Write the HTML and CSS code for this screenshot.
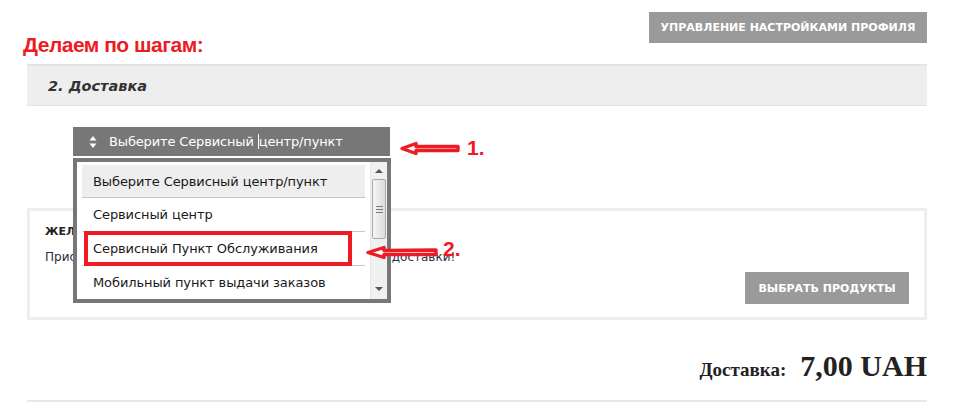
FILE: index.html
```html
<!DOCTYPE html>
<html lang="ru">
<head>
<meta charset="utf-8">
<title>Доставка</title>
<link rel="stylesheet" href="styles.css">
</head>
<body>
<div class="page">
  <header class="top">
    <h1 class="steps-title">Делаем по шагам:</h1>
    <a class="btn btn-profile" href="#">УПРАВЛЕНИЕ НАСТРОЙКАМИ ПРОФИЛЯ</a>
  </header>

  <section class="step">
    <div class="step-head">2. Доставка</div>
    <div class="step-body">
      <div class="select-wrap">
        <div class="select">
          <svg class="select-icon" width="8" height="14" viewBox="0 0 8 14"><path d="M4 1 L7.5 5.5 L0.5 5.5 Z M4 13 L7.5 8.5 L0.5 8.5 Z" fill="#fff"/></svg>
          <span class="select-text">Выберите Сервисный <span class="caret"></span>центр/пункт</span>
        </div>

        <div class="dropdown">
          <ul class="options">
            <li class="option option-first">Выберите Сервисный центр/пункт</li>
            <li class="option">Сервисный центр</li>
            <li class="option">Сервисный Пункт Обслуживания</li>
            <li class="option">Мобильный пункт выдачи заказов</li>
          </ul>
          <div class="scrollbar">
            <span class="sb-up"></span>
            <span class="sb-thumb"><span class="grip"></span><span class="grip"></span><span class="grip"></span></span>
            <span class="sb-down"></span>
          </div>
          <div class="highlight"></div>
        </div>

        <svg class="note-arrow note-arrow-1" width="62" height="15" viewBox="0 0 62 15"><path d="M3 7.5 L17 2.5 L17 5.5 L59 5.5 L59 9.5 L17 9.5 L17 12.5 Z" fill="#fff" stroke="#ed1c24" stroke-width="3.4" stroke-linejoin="round"/></svg>
        <span class="note-num note-num-1">1.</span>
        <svg class="note-arrow note-arrow-2" width="74" height="15" viewBox="0 0 74 15"><path d="M3 7.5 L19 2.5 L19 5.5 L71 5 L71 9.5 L19 9.5 L19 12.5 Z" fill="#fff" stroke="#ed1c24" stroke-width="3.4" stroke-linejoin="round"/></svg>
        <span class="note-num note-num-2">2.</span>
      </div>

      <div class="panel">
        <div class="panel-title">ЖЕЛАЕМЫЙ СПОСОБ ДОСТАВКИ</div>
        <div class="panel-text">Приоритетный способ и срок указан при оформлении доставки!</div>
        <div class="panel-actions">
          <a class="btn btn-products" href="#">ВЫБРАТЬ ПРОДУКТЫ</a>
        </div>
      </div>
    </div>
  </section>

  <div class="total">
    <span class="total-label">Доставка:</span>
    <span class="total-value">7,00 UAH</span>
  </div>
</div>
</body>
</html>
```

FILE: styles.css
```css
* { box-sizing: border-box; }

body {
  margin: 0;
  background: #fff;
  font-family: "DejaVu Sans", Verdana, sans-serif;
  color: #222;
}

.page {
  width: 900px;
  margin-left: 27px;
}

.top {
  height: 64px;
  display: flex;
  justify-content: space-between;
  align-items: flex-start;
}

.steps-title {
  margin: 34px 0 0 -4px;
  font-family: "Liberation Sans", Arial, sans-serif;
  font-size: 21px;
  line-height: 21px;
  letter-spacing: -0.5px;
  font-weight: bold;
  color: #ed1c24;
}

.btn {
  display: flex;
  align-items: center;
  justify-content: center;
  background: #999a99;
  color: #fff;
  font-family: "DejaVu Sans", Verdana, sans-serif;
  font-weight: bold;
  font-size: 11px;
  text-decoration: none;
}

.btn-profile {
  margin-top: 12px;
  width: 278px;
  height: 31px;
}

.step-head {
  height: 42px;
  background: #eeeeee;
  border-top: 2px solid #e3e3e3;
  border-bottom: 1px solid #e3e3e3;
  padding-left: 21px;
  display: flex;
  align-items: center;
  font-weight: bold;
  font-style: italic;
  font-size: 14.5px;
  color: #333;
}

.step-body {
  padding-top: 21px;
}

.select-wrap {
  position: relative;
  margin-left: 46px;
  width: 317px;
}

.select {
  height: 29px;
  background: #777777;
  display: flex;
  align-items: center;
  padding-left: 16px;
  gap: 12px;
  color: #fff;
  font-size: 13px;
  letter-spacing: -0.15px;
}

.select-icon { display: block; }

.select-text { white-space: nowrap; }

.caret {
  display: inline-block;
  width: 1px;
  height: 15px;
  background: #fff;
  vertical-align: -3px;
}

.dropdown {
  position: absolute;
  left: 0;
  top: 31px;
  width: 318px;
  height: 145px;
  background: #fff;
  border: 4px solid #777777;
  display: flex;
  padding-left: 5px;
  z-index: 2;
}

.options {
  list-style: none;
  margin: 0;
  padding: 3px 0 0 0;
  width: 283px;
  overflow: hidden;
}

.option {
  height: 34px;
  border-bottom: 1px solid #c8c8c8;
  display: flex;
  align-items: center;
  padding-left: 11px;
  font-size: 13px;
  letter-spacing: -0.1px;
  color: #1a1a1a;
  white-space: nowrap;
}

.option-first {
  background: #eeeeee;
  height: 33px;
}

.scrollbar {
  margin-left: 5px;
  width: 17px;
  background: #f0f0f0;
  border-left: 1px solid #e6e6e6;
  display: flex;
  flex-direction: column;
  align-items: center;
  padding-top: 7px;
}

.sb-up, .sb-down {
  width: 0;
  height: 0;
  border-left: 4px solid transparent;
  border-right: 4px solid transparent;
}
.sb-up { border-bottom: 4px solid #555; }
.sb-down { border-top: 4px solid #555; margin-top: auto; margin-bottom: 8px; }

.sb-thumb {
  margin-top: 6px;
  width: 14px;
  height: 60px;
  border: 1px solid #a8a8a8;
  border-radius: 2px;
  background: linear-gradient(to right, #f4f4f4, #dcdcdc);
  display: flex;
  flex-direction: column;
  align-items: center;
  justify-content: center;
  gap: 2px;
}

.grip {
  width: 7px;
  height: 1px;
  background: #7a7a7a;
}

.highlight {
  position: absolute;
  left: 7px;
  top: 69px;
  width: 268px;
  height: 35px;
  border: 4px solid #ed1c24;
}

.note-arrow {
  position: absolute;
  z-index: 3;
  display: block;
}
.note-arrow-1 { left: 326px; top: 14px; }
.note-arrow-2 { left: 292px; top: 118px; }

.note-num {
  position: absolute;
  z-index: 3;
  font-family: "Liberation Sans", Arial, sans-serif;
  font-size: 21px;
  line-height: 21px;
  font-weight: bold;
  color: #ed1c24;
}
.note-num-1 { left: 394px; top: 10px; }
.note-num-2 { left: 370px; top: 111px; }

.panel {
  margin-top: 52px;
  height: 112px;
  border: 3px solid #eeeeee;
  padding: 14px 15px 13px 15px;
  display: flex;
  flex-direction: column;
}

.panel-title {
  font-size: 11px;
  font-weight: bold;
  color: #222;
  line-height: 14px;
}

.panel-text {
  margin-top: 11px;
  font-size: 12px;
  color: #2c2c44;
  line-height: 14px;
  white-space: nowrap;
}

.panel-actions {
  margin-top: auto;
  display: flex;
  justify-content: flex-end;
}

.btn-products {
  width: 164px;
  height: 32px;
}

.total {
  height: 82px;
  border-bottom: 2px solid #e8e8e8;
  display: flex;
  justify-content: flex-end;
  align-items: baseline;
  padding-top: 29px;
  gap: 14px;
  font-family: "Liberation Serif", "Times New Roman", serif;
  color: #222;
}

.total-label {
  font-size: 19px;
  font-weight: bold;
}

.total-value {
  font-size: 30px;
  font-weight: bold;
}
```
